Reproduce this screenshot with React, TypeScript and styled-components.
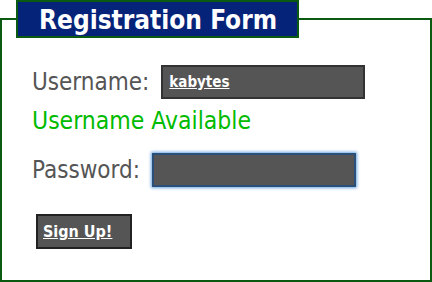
import styled, { createGlobalStyle } from 'styled-components'

const GlobalStyle = createGlobalStyle`
  html, body {
    margin: 0;
    padding: 0;
    background: #ffffff;
  }
  body {
    font-family: "DejaVu Sans Condensed", "DejaVu Sans", sans-serif;
  }
`

const Frame = styled.fieldset`
  box-sizing: border-box;
  width: 432px;
  height: 282px;
  margin: 0;
  padding: 0 14px;
  border: 2px solid #0b5a12;
`

const Title = styled.legend`
  box-sizing: border-box;
  height: 38px;
  padding: 0 20px 0 21px;
  background: #06237a;
  border: 2px solid #0b5a12;
  color: #ffffff;
  font-family: "DejaVu Sans Condensed", "DejaVu Sans", sans-serif;
  font-weight: 700;
  font-size: 26px;
  line-height: 37px;
  overflow: hidden;
`

const Body = styled.div`
  display: flex;
  flex-direction: column;
  align-items: flex-start;
  padding: 27px 0 0 16px;
`

const Row = styled.div<{ $gap: number }>`
  display: flex;
  align-items: center;
  gap: ${(p) => p.$gap}px;
`

const Label = styled.label`
  color: #555555;
  font-size: 24px;
  line-height: 34px;
`

const Field = styled.input<{ $focused?: boolean }>`
  box-sizing: border-box;
  width: 204px;
  height: 34px;
  margin: 0;
  padding: 0 6px;
  background: #555555;
  border: 2px solid ${(p) => (p.$focused ? '#2a4f78' : '#333333')};
  box-shadow: ${(p) => (p.$focused ? '0 0 3px 1px #6aa6e0' : 'none')};
  color: #ffffff;
  font-family: "DejaVu Sans Condensed", "DejaVu Sans", sans-serif;
  font-weight: 700;
  font-size: 15px;
  text-decoration: underline;
  outline: none;
`

const Status = styled.div`
  color: #00bb00;
  font-size: 24.5px;
  line-height: 28px;
  margin: 8px 0 18px;
`

const SubmitButton = styled.button`
  box-sizing: border-box;
  width: 96px;
  height: 35px;
  margin: 27px 0 0 4px;
  padding: 0 0 0 5px;
  text-align: left;
  background: #555555;
  border: 2px solid #222222;
  color: #ffffff;
  font-family: "DejaVu Sans Condensed", "DejaVu Sans", sans-serif;
  font-weight: 700;
  font-size: 16px;
  text-decoration: underline;
  cursor: pointer;
`

export default function App() {
  return (
    <>
      <GlobalStyle />
      <Frame>
        <Title>Registration Form</Title>
        <Body>
          <Row $gap={12}>
            <Label htmlFor="username">Username:</Label>
            <Field id="username" defaultValue="kabytes" />
          </Row>
          <Status>Username Available</Status>
          <Row $gap={12}>
            <Label htmlFor="password">Password:</Label>
            <Field id="password" type="password" $focused />
          </Row>
          <SubmitButton type="submit">Sign Up!</SubmitButton>
        </Body>
      </Frame>
    </>
  )
}
